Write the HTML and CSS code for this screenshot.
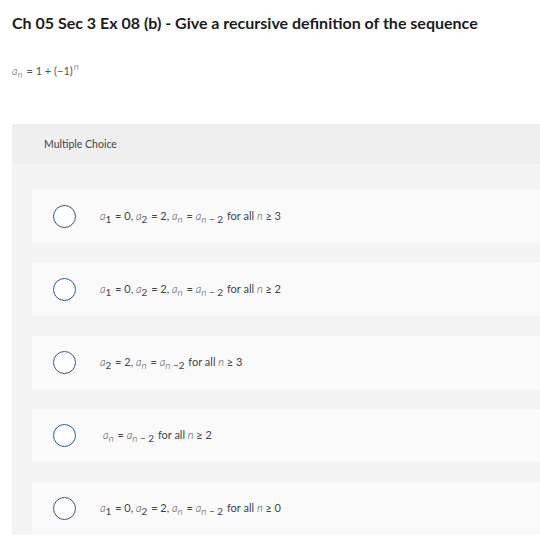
FILE: index.html
```html
<!DOCTYPE html>
<html>
<head>
<meta charset="utf-8">
<link rel="stylesheet" href="styles.css">
</head>
<body>
<h1 class="title">Ch 05 Sec 3 Ex 08 (b) - Give a recursive definition of the sequence</h1>
<p class="formula"><i>a</i><span class="sub"><i>n</i></span> = 1 + (−1)<span class="sup"><i>n</i></span></p>
<section class="panel">
  <div class="panel-head">Multiple Choice</div>
  <ul class="options">
    <li class="option"><span class="radio"></span><span class="label"><i>a</i><span class="sub">1</span> = 0, <i>a</i><span class="sub">2</span> = 2, <i>a</i><span class="sub"><i>n</i></span> = <i>a</i><span class="sub"><i>n</i> − 2</span> for all <i>n</i> ≥ 3</span></li>
    <li class="option"><span class="radio"></span><span class="label"><i>a</i><span class="sub">1</span> = 0, <i>a</i><span class="sub">2</span> = 2, <i>a</i><span class="sub"><i>n</i></span> = <i>a</i><span class="sub"><i>n</i> − 2</span> for all <i>n</i> ≥ 2</span></li>
    <li class="option"><span class="radio"></span><span class="label"><i>a</i><span class="sub">2</span> = 2, <i>a</i><span class="sub"><i>n</i></span> = <i>a</i><span class="sub"><i>n</i> −2</span> for all <i>n</i> ≥ 3</span></li>
    <li class="option"><span class="radio"></span><span class="label indent"><i>a</i><span class="sub"><i>n</i></span> = <i>a</i><span class="sub"><i>n</i> − 2</span> for all <i>n</i> ≥ 2</span></li>
    <li class="option"><span class="radio"></span><span class="label"><i>a</i><span class="sub">1</span> = 0, <i>a</i><span class="sub">2</span> = 2, <i>a</i><span class="sub"><i>n</i></span> = <i>a</i><span class="sub"><i>n</i> − 2</span> for all <i>n</i> ≥ 0</span></li>
  </ul>
</section>
</body>
</html>
```
FILE: styles.css
```css
html, body {
  margin: 0;
  padding: 0;
  background: #ffffff;
}
body {
  padding-left: 12px;
  font-family: Lato, "Liberation Sans", sans-serif;
  color: #333;
  overflow: hidden;
}
.title {
  margin: 0;
  padding-top: 13px;
  font-size: 16px;
  line-height: 19px;
  font-weight: 700;
  color: #1c1c1c;
}
.formula {
  margin: 27px 0 0;
  font-size: 11px;
  line-height: 14px;
  color: #555;
}
i {
  font-style: italic;
  font-weight: 300;
}
.sub {
  font-size: 10px;
  vertical-align: -3px;
  margin-right: 1px;
}
.sup {
  font-size: 10px;
  vertical-align: 5px;
  margin-left: 1px;
}
.panel {
  margin-top: 43px;
  background: #f4f4f4;
}
.panel-head {
  height: 40px;
  display: flex;
  align-items: center;
  padding-left: 32px;
  background: #efefef;
  font-size: 10.5px;
  font-weight: 400;
  color: #444;
}
.options {
  list-style: none;
  margin: 0;
  padding: 26px 0 0 20px;
  display: flex;
  flex-direction: column;
  gap: 20px;
}
.option {
  height: 53px;
  display: flex;
  align-items: center;
  padding-left: 21px;
  background: #fafafa;
}
.radio {
  box-sizing: border-box;
  width: 23px;
  height: 23px;
  border: 1.5px solid #2d5a8a;
  border-radius: 50%;
  background: #fff;
  flex: none;
}
.label {
  margin-left: 24px;
  font-size: 11px;
  color: #444;
  white-space: nowrap;
}
.label.indent {
  margin-left: 27px;
}
```
